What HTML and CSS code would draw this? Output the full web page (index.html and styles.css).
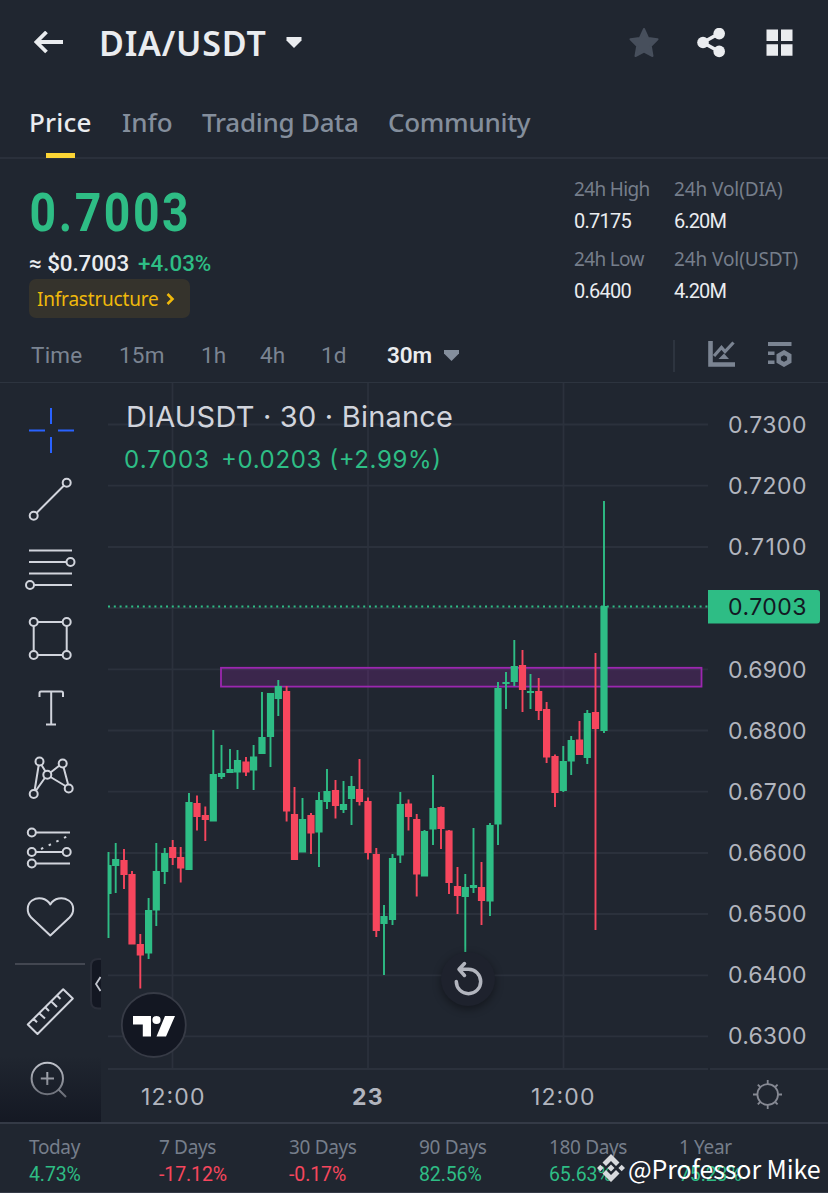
FILE: index.html
```html
<!DOCTYPE html>
<html lang="en">
<head>
<meta charset="utf-8">
<title>DIA/USDT</title>
<link rel="stylesheet" href="styles.css">
</head>
<body>
<div class="app">
  <header class="header">
    <svg class="back" width="30" height="24" viewBox="34 31 30 24"><path d="M63 42H37M46.500 32L36.500 42L46.500 52" fill="none" stroke="#eaecef" stroke-width="3.800"/></svg>
    <h1 class="pair">DIA/USDT</h1>
    <svg class="caret" width="16" height="12" viewBox="0 1 16 12"><path d="M.5 1H15.500V4.500L8 12L.5 4.500Z" fill="#eaecef"/></svg>
    <div class="actions">
      <svg width="30" height="30" viewBox="629 28 30 30"><path d="M644 29L648.200 38.100L657.500 39.300L650.800 46L652.500 56L644 51.600L635.500 56L637.200 46L630.500 39.300L639.800 38.100Z" fill="#474f5c" stroke="#474f5c" stroke-width="2" stroke-linejoin="round"/></svg>
      <svg width="30" height="30" viewBox="697 28 30 30"><path d="M719 33.500L703 42.500L719 51.500" fill="none" stroke="#eaecef" stroke-width="3.600"/><g fill="#eaecef"><circle cx="719.200" cy="33.600" r="5.800"/><circle cx="703" cy="42.500" r="5.800"/><circle cx="719.200" cy="51.400" r="5.800"/></g></svg>
      <svg width="28" height="28" viewBox="0 0 28 28"><path d="M1.500 .5H13V12H1.500ZM16 .5H27.500V12H16ZM1.500 15.300H13V26.800H1.500ZM16 15.300H27.500V26.800H16Z" fill="#eaecef"/></svg>
    </div>
  </header>

  <nav class="tabs">
    <a class="tab tab-price">Price</a>
    <a class="tab tab-info">Info</a>
    <a class="tab tab-trading">Trading Data</a>
    <a class="tab tab-community">Community</a>
  </nav>

  <section class="summary">
    <div class="quote">
      <div class="last">0.7003</div>
      <div class="fiat"><span class="approx">≈ $0.7003</span><span class="change">+4.03%</span></div>
      <div class="tag"><span>Infrastructure</span><svg width="9" height="14" viewBox="0 0 9 14"><path d="M1.500 2L6.500 7L1.500 12" fill="none" stroke="#f0b90b" stroke-width="2.600"/></svg></div>
    </div>
    <dl class="stats">
      <div><dt class="narrow">24h High</dt><dd>0.7175</dd></div>
      <div><dt>24h Vol(DIA)</dt><dd>6.20M</dd></div>
      <div><dt class="narrow">24h Low</dt><dd>0.6400</dd></div>
      <div><dt>24h Vol(USDT)</dt><dd>4.20M</dd></div>
    </dl>
  </section>

  <div class="periods">
    <div class="period-list">
      <span>Time</span><span>15m</span><span>1h</span><span>4h</span><span>1d</span><span class="active">30m</span>
      <svg width="17" height="12" viewBox="0 0 17 12"><path d="M1 0H16V3.500L8.500 11L1 3.500Z" fill="#848e9c"/></svg>
    </div>
    <div class="period-tools">
      <svg width="28" height="28" viewBox="708 340 28 28"><path d="M710.500 341V364.500H735" fill="none" stroke="#7b8492" stroke-width="4.600"/><path d="M714 356L721.500 347.500L725 351.500L733.500 342.500" fill="none" stroke="#7b8492" stroke-width="3.200"/><path d="M718.500 359L724 353.500L729 359Z" fill="#7b8492"/></svg>
      <svg width="26" height="26" viewBox="767 341 26 26"><path d="M768 342H791.500V346H768ZM768 351.500H774.500V355H768ZM768 360.500H774.500V364H768Z" fill="#7b8492"/><path d="M784 352.500L789.300 355.600V361.400L784 364.500L778.700 361.400V355.600Z" fill="none" stroke="#7b8492" stroke-width="4.400"/></svg>
    </div>
  </div>

  <main class="workspace">
    <aside class="toolbar">
      <svg width="101" height="82" viewBox="0 383 101 82" stroke="#2962ff"><path d="M51 408V424M51 437V453M29 430.500H45M58 430.500H74"/></svg>
      <svg width="101" height="69" viewBox="0 465 101 69"><path d="M36.500 513L64 485.500"/><circle cx="33.700" cy="515.700" r="4"/><circle cx="66.700" cy="482.700" r="4"/></svg>
      <svg width="101" height="70" viewBox="0 534 101 70"><path d="M29 550.500H72M29 562H66M29 573.500H72M34 585H72"/><circle cx="70.500" cy="562" r="4"/><circle cx="30" cy="585" r="4"/></svg>
      <svg width="101" height="69" viewBox="0 604 101 69"><path d="M38 622H62.500M38 655H62.500M33.700 626V651M66.700 626V651"/><circle cx="33.700" cy="622" r="4"/><circle cx="66.700" cy="622" r="4"/><circle cx="33.700" cy="655" r="4"/><circle cx="66.700" cy="655" r="4"/></svg>
      <svg width="101" height="70" viewBox="0 673 101 70"><path d="M39.500 697V693Q39.500 691.500 41 691.500H61.500Q63 691.500 63 693V697M51.200 691.500V724.500M46 724.500H56"/></svg>
      <svg width="101" height="70" viewBox="0 743 101 70"><path d="M34.700 790L38.700 765M41.500 765L45.500 771.500M36 790.500L44.800 778M50.500 772.500L59.500 765.500M50.500 777L65.500 786M63.500 767L68 784"/><circle cx="39.500" cy="761.500" r="4"/><circle cx="62.700" cy="763.500" r="4"/><circle cx="47.300" cy="774.800" r="4"/><circle cx="33.700" cy="794" r="4"/><circle cx="68.700" cy="788.500" r="4"/></svg>
      <svg width="101" height="70" viewBox="0 813 101 70"><path d="M36 832.500H70M36 852H63M36 863.500H70"/><path d="M41 849L67 836.500" stroke-dasharray="2.500 6"/><circle cx="31.800" cy="832.500" r="4"/><circle cx="31.800" cy="852" r="4"/><circle cx="66.700" cy="852" r="4"/><circle cx="31.800" cy="863.500" r="4"/></svg>
      <svg width="101" height="80" viewBox="0 883 101 80"><path d="M50.300 935.500L31.200 917.500C26 912 27 904 32 900.500C38 896.500 46.500 898 50.300 904.500C54 898 62.500 896.500 68.700 900.500C74 904 75 912 69.500 917.500Z" stroke-linejoin="round"/></svg>
      <div class="divider"></div>
      <svg width="101" height="81" viewBox="0 965 101 81"><path d="M63.200 989.300L72.800 998.500L37.500 1034L27.800 1024.500ZM33.700 1019L37 1022.300M39.500 1013.500L45 1018.500M45.500 1007.500L49 1011M51.300 1001.500L57 1007M57 995.500L60.500 999" stroke-linejoin="round"/></svg>
      <svg width="101" height="76" viewBox="0 1046 101 76"><circle cx="47.300" cy="1078.500" r="15.700"/><path d="M47.300 1072V1085M40.800 1078.500H54M58.500 1089.500L66 1097"/></svg>
      <div class="fade"></div>
      <svg class="collapse" width="11" height="52" viewBox="90 958 11 52"><path d="M101 959H98Q91 959 91 966V1001Q91 1008.500 98 1008.500H101" fill="#131722" stroke="#2a2e39"/><path d="M100.500 977L96 984L100.500 991" fill="none" stroke="#c1c4cd" stroke-width="1.800"/></svg>
    </aside>

    <svg class="chart" width="727" height="739" viewBox="101 383 727 739">
      <path class="grid" d="M108 424.500H708M108 485.700H708M108 547H708M108 608H708M108 669.300H708M108 730.500H708M108 791.700H708M108 853H708M108 914H708M108 975.300H708M108 1036.300H708M172.500 383V1068M368 383V1068M563.500 383V1068M108 1069H708M710 1069H828"/>
      <rect x="221" y="667.800" width="480.500" height="18.800" fill="#9c27b0" fill-opacity=".22" stroke="#9c27b0" stroke-width="1.800"/>
      <path d="M108 606.500H708" stroke="#2ebd85" stroke-width="2" stroke-dasharray="2 3.800"/>
      <g fill="none" stroke="#2ebd85">
        <path class="wick" d="M108.500 852V938M115.700 843V893M148.600 898V959M156.300 843V926M164.700 848V884M189 793V869M213.300 730V821M221.500 745V779M230 749V773M237.500 750V789M253.600 745V790M262 692V754M270.500 693V767M278.300 680V716M302.500 798V852M319 792V867M327 769V809M343.500 781V813M351.500 776V825M384 905V975M392.500 854V925M400.300 792V863M424.500 830V876M433 775V845M465.300 874V952M473.500 828V893M490 823V916M498 682V845M506 672V709M514.300 640V686M530.500 674V709M563.300 746V792M571.200 736V775M587.300 710V764M604 501V733"/>
        <path class="body" d="M115.700 859V866M148.600 910V953.500M156.300 871V910.500M164.700 853V872M189 802V870M213.300 774V821.500M221.500 773V777M230 769V773M237.500 760V772.500M253.600 756.500V770.500M262 737V754M270.500 693V737M278.300 686V699M302.500 819V852.500M319 800V832.500M327 791V802M343.500 804V810M351.500 786V799M384 916V924M392.500 858V920M400.300 804V855.500M424.500 831V876.500M433 808V829.500M465.300 887V897M473.500 885V888M490 825V901.500M498 688V824.500M506 682V684M514.300 666V682M530.500 691V693M563.300 761V791M571.200 740V761.500M587.300 713V758M604 606V731"/>
        <path d="M109.800 865V894" stroke-width="3.500"/>
      </g>
      <g fill="none" stroke="#f6465d">
        <path class="wick" d="M124 849V889M132 871V944M140.300 934V988.500M172.700 840V865M180.700 847V882.500M197 795.500V830.500M205.300 806.500V841M246 757V776M286.600 686V821.500M294.500 787V860M311 813V854M335.500 780V818.500M359.500 759V805.500M368 797.500V859.500M376.300 848V937M408.500 799.500V830.500M416.700 814V896.500M441 806.500V849M449 830V894M457.500 867V914M481.500 862V925M522.500 650V712M538.700 678V720M546.600 702V763M555 754.500V807M579.500 721V755M595.500 653V930"/>
        <path class="body" d="M124 860V875M132 874V944.500M140.300 944V955.500M172.700 847V858M180.700 857V868.500M197 803V817M205.300 815V820M246 761.500V772.500M286.600 691V811.500M294.500 814V860M311 815V833.500M335.500 790V806M359.500 789V802M368 801V853M376.300 854V931M408.500 803.500V817M416.700 819V874.500M441 807V829M449 830.500V883M457.500 886V896M481.500 887V901M522.500 665V690M538.700 691V711M546.600 709V757.500M555 756V793M579.500 739.500V755M595.500 712V729"/>
      </g>
      <g class="legend">
        <text x="126" y="426.500" font-size="29" fill="#d1d4dc" textLength="327">DIAUSDT · 30 · Binance</text>
        <g font-size="24" fill="#2ebd85"><text x="124" y="468" textLength="85">0.7003</text><text x="221" y="468" textLength="220">+0.0203 (+2.99%)</text></g>
      </g>
      <g class="axis">
        <text x="728" y="433" textLength="78.500">0.7300</text>
        <text x="728" y="494" textLength="78.500">0.7200</text>
        <text x="728" y="555" textLength="78.500">0.7100</text>
        <text x="728" y="677.500" textLength="78.500">0.6900</text>
        <text x="728" y="738.500" textLength="78.500">0.6800</text>
        <text x="728" y="800" textLength="78.500">0.6700</text>
        <text x="728" y="861" textLength="78.500">0.6600</text>
        <text x="728" y="922" textLength="78.500">0.6500</text>
        <text x="728" y="983" textLength="78.500">0.6400</text>
        <text x="728" y="1044" textLength="78.500">0.6300</text>
        <text x="141" y="1105" textLength="63.500">12:00</text>
        <text x="352" y="1105" textLength="30.500" font-weight="700">23</text>
        <text x="531" y="1105" textLength="63.500">12:00</text>
      </g>
      <path d="M708 590H817Q820 590 820 593V620Q820 623.500 817 623.500H708Z" fill="#2ebd85"/>
      <text class="price-flag" x="728" y="615" textLength="78.500">0.7003</text>
      <circle cx="153.800" cy="1025" r="32" fill="#131722" stroke="#373b46" stroke-width="1.800"/>
      <path d="M133 1016H151V1036.500H142.800V1024.500H133ZM165 1016H175L166 1036.500H156.500Z" fill="#fff"/>
      <circle cx="156.500" cy="1020" r="4.100" fill="#fff"/>
      <circle class="reset" cx="468" cy="979" r="27"/>
      <path d="M456.300 981.500A12.200 12.200 0 1 0 468.500 969.300H460M464.500 963.500L459 969.300L464.500 975.500" fill="none" stroke="#b2b5be" stroke-width="3.500" stroke-linecap="round" stroke-linejoin="round"/>
      <g fill="none" stroke="#868993" stroke-width="1.800"><circle cx="767.700" cy="1094.500" r="10.300"/><path d="M767.700 1084V1080M767.700 1105V1109M757.200 1094.500H753M778.200 1094.500H782M760.200 1087L757.800 1084.600M775.200 1087L777.600 1084.600M760.200 1102L757.800 1104.400M775.200 1102L777.600 1104.400"/></g>
    </svg>
  </main>

  <footer class="returns">
    <div class="up"><span>Today</span><b>4.73%</b></div>
    <div class="down"><span>7 Days</span><b>-17.12%</b></div>
    <div class="down"><span>30 Days</span><b>-0.17%</b></div>
    <div class="up"><span>90 Days</span><b>82.56%</b></div>
    <div class="up"><span>180 Days</span><b>65.63%</b></div>
    <div class="up"><span>1 Year</span><b>75.23%</b></div>
    <div class="watermark">
      <svg width="28" height="28" viewBox="0 0 28 28" fill="#d8dadd"><path d="M14 0L22.500 8.500L19 12L14 7L9 12L5.500 8.500ZM14 28L5.500 19.500L9 16L14 21L19 16L22.500 19.500ZM0 14L3.300 10.700L6.600 14L3.300 17.300ZM21.400 14L24.700 10.700L28 14L24.700 17.300ZM10.500 14L14 10.500L17.500 14L14 17.500Z"/></svg>
      <span>@Professor Mike</span>
    </div>
  </footer>
</div>
</body>
</html>
```
FILE: styles.css
```css
* { box-sizing: border-box; }

body {
  margin: 0;
  background: #202630;
  font-family: "Noto Sans", sans-serif;
  color: #eaecef;
}

svg { display: block; flex: none; }

.app {
  width: 828px;
  height: 1193px;
  display: flex;
  flex-direction: column;
  overflow: hidden;
  white-space: nowrap;
}

.header {
  height: 86px;
  padding: 0 34px;
  display: flex;
  align-items: center;
}
.pair {
  margin: 0 0 0 35px;
  width: 187px;
  font-size: 34px;
  line-height: 46px;
  font-weight: 600;
  letter-spacing: .8px;
}
.actions {
  margin-left: auto;
  margin-right: 1px;
  display: flex;
  align-items: center;
  gap: 38px;
}

.tabs {
  height: 73px;
  padding-left: 29px;
  display: grid;
  grid-template-columns: 92px 81px 185px 200px;
  border-bottom: 2px solid #2a303b;
  font-size: 26px;
  font-weight: 500;
  line-height: 72px;
  color: #848e9c;
}
.tab-price {
  letter-spacing: .2px;
  color: #eaecef;
  background: linear-gradient(#fcd535, #fcd535) 17px 67px / 29px 5px no-repeat;
}
.tab-info { padding-left: 1px; }
.tab-trading { letter-spacing: -.25px; }
.tab-community { letter-spacing: -.3px; padding-left: 1px; }

.summary {
  height: 171px;
  padding: 16px 0 0 29px;
  display: flex;
}
.quote { width: 545px; }
.last {
  width: 190px;
  font: 700 54px/74px Roboto, sans-serif;
  letter-spacing: 3px;
  color: #2ebd85;
  transform: translateY(1px) scaleX(.857);
  transform-origin: 4px 0;
}
.fiat {
  height: 30px;
  display: flex;
  gap: 9px;
  font: 500 22.4px/28px Roboto, "Noto Sans", sans-serif;
}
.approx { letter-spacing: -.1px; }
.change { color: #2ebd85; }
.tag {
  width: 161px;
  height: 39px;
  padding-left: 8px;
  display: flex;
  align-items: center;
  gap: 7px;
  border-radius: 7px;
  background: #35332c;
  color: #f0b90b;
  font-size: 19px;
  letter-spacing: -.2px;
}
.stats {
  margin: 0;
  display: grid;
  grid-template-columns: 100px 140px;
  grid-auto-rows: 70px;
  font-size: 19px;
}
.stats dt { line-height: 29px; color: #767e8b; letter-spacing: -.1px; }
.stats .narrow { letter-spacing: -.65px; }
.stats dd { margin: 2px 0 0; font: 400 20px/31px Roboto, sans-serif; letter-spacing: -.75px; }
.stats div:nth-child(even) dd { letter-spacing: -.9px; }

.periods {
  height: 53px;
  padding-left: 31px;
  display: flex;
  align-items: center;
  border-bottom: 1px solid #2d343f;
}
.period-list {
  width: 642px;
  display: grid;
  grid-template-columns: 88px 82px 59px 61px 66px 56px 17px;
  align-items: center;
  font: 400 22.5px/30px Roboto, sans-serif;
  letter-spacing: .2px;
  color: #7b8492;
}
.period-list span { height: 32px; }
.period-list .active { font-weight: 600; color: #eaecef; letter-spacing: -.1px; }
.period-tools {
  height: 32px;
  padding-left: 33px;
  display: flex;
  align-items: center;
  gap: 31px;
  border-left: 2px solid #2d343f;
}
.period-tools svg { margin-top: -4px; }

.workspace { height: 739px; display: flex; }
.toolbar {
  position: relative;
  width: 101px;
  fill: none;
  stroke: #d1d4dc;
  stroke-width: 2;
}
.divider { width: 70px; height: 2px; margin-left: 15px; background: #434751; }
.fade {
  position: absolute;
  left: 0;
  bottom: 0;
  width: 101px;
  height: 66px;
  background: linear-gradient(rgba(19, 23, 34, 0), rgba(19, 23, 34, .9));
}
.collapse { position: absolute; left: 90px; top: 575px; }

.chart { font-family: Inter, sans-serif; }
.grid { fill: none; stroke: #2b313c; stroke-width: 1.8; }
.wick { stroke-width: 1.9; }
.body { stroke-width: 7.2; }
.axis { font-size: 23px; fill: #b2b5be; }
.price-flag { font-size: 23px; fill: #131722; }
.reset { fill: #1e222d; filter: drop-shadow(0 3px 4px rgba(0, 0, 0, .4)); }

.returns {
  position: relative;
  height: 71px;
  padding: 10px 0 0 29px;
  display: grid;
  grid-template-columns: repeat(6, 130px);
  border-top: 2px solid #343a46;
  border-bottom: 1px solid #343a46;
  font-size: 19px;
}
.returns > div:not(.watermark) { display: flex; flex-direction: column; }
.returns span { line-height: 27px; color: #767e8b; letter-spacing: -.35px; }
.returns b { font: 400 19.500px/27px Roboto, sans-serif; letter-spacing: -.1px; }
.up b { color: #2ebd85; }
.down b { color: #f6465d; }
.returns .watermark {
  position: absolute;
  left: 597px;
  top: 27px;
  display: flex;
  align-items: center;
  gap: 3px;
}
.returns .watermark span {
  font: 400 25px/34px "Noto Sans CJK SC", sans-serif;
  letter-spacing: -.1px;
  color: #fff;
}
```
